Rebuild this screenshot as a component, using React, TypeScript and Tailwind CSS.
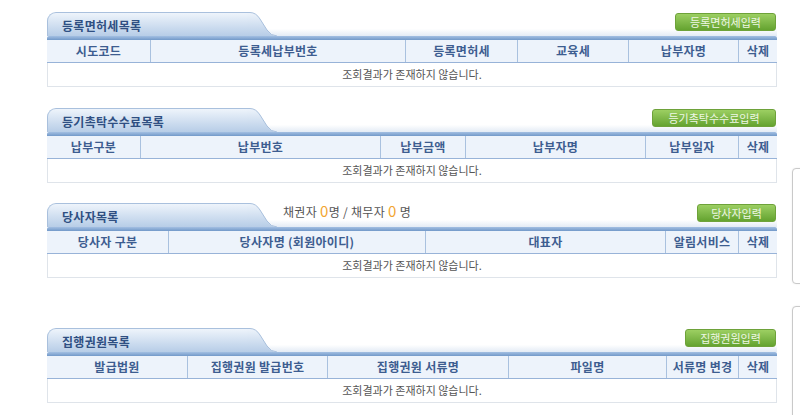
import React from "react";

const KR = { fontFamily: '"Noto Sans CJK KR", "Noto Sans", sans-serif' };

function TabCurve() {
  return (
    <svg width="30" height="24" viewBox="0 0 30 24" className="block shrink-0">
      <defs>
        <linearGradient id="tg" x1="0" y1="0" x2="0" y2="1">
          <stop offset="0" stopColor="#eef4fb" />
          <stop offset="1" stopColor="#b7cde7" />
        </linearGradient>
      </defs>
      <path d="M0,0.5 L3,0.5 Q9,0.5 13,7 L20,18 Q24,24 30,24 L0,24 Z" fill="url(#tg)" />
      <path d="M0,0.5 L3,0.5 Q9,0.5 13,7 L20,18 Q24,24 30,24" fill="none" stroke="#a9c0dd" strokeWidth="1" />
    </svg>
  );
}

type Sec = {
  title: string;
  button: string;
  btnW: string;
  cols: string;
  heads: string[];
  extra?: boolean;
  mt: string;
};

const sections: Sec[] = [
  {
    title: "등록면허세목록",
    button: "등록면허세입력",
    btnW: "w-[101px]",
    cols: "grid-cols-[103px_255px_112px_111px_110px_39px]",
    heads: ["시도코드", "등록세납부번호", "등록면허세", "교육세", "납부자명", "삭제"],
    mt: "mt-[12px]",
  },
  {
    title: "등기촉탁수수료목록",
    button: "등기촉탁수수료입력",
    btnW: "w-[124px]",
    cols: "grid-cols-[93px_240px_85px_180px_93px_39px]",
    heads: ["납부구분", "납부번호", "납부금액", "납부자명", "납부일자", "삭제"],
    mt: "mt-[21px]",
  },
  {
    title: "당사자목록",
    button: "당사자입력",
    btnW: "w-[79px]",
    cols: "grid-cols-[121px_257px_240px_73px_39px]",
    heads: ["당사자 구분", "당사자명 (회원아이디)", "대표자", "알림서비스", "삭제"],
    extra: true,
    mt: "mt-[20px]",
  },
  {
    title: "집행권원목록",
    button: "집행권원입력",
    btnW: "w-[91px]",
    cols: "grid-cols-[140px_140px_181px_158px_72px_39px]",
    heads: ["발급법원", "집행권원 발급번호", "집행권원 서류명", "파일명", "서류명 변경", "삭제"],
    mt: "mt-[50px]",
  },
];

function Section({ s }: { s: Sec }) {
  return (
    <div className={s.mt}>
      <div className="flex h-[24px] items-start bg-[linear-gradient(to_bottom,transparent_70%,#e3ebf5)]">
        <div className="flex h-[24px] items-end">
          <div className="flex h-[24px] w-[200px] items-end rounded-tl-[9px] border-l border-t border-[#a9c0dd] bg-gradient-to-b from-[#eef4fb] to-[#b7cde7] pb-[3px] pl-[14px]">
            <span className="text-[12px] font-bold leading-[14px] tracking-[0.3px] text-[#2f4f82]">{s.title}</span>
          </div>
          <TabCurve />
        </div>
        {s.extra ? (
          <div className="ml-[6px] mt-[1px] flex items-baseline text-[12px] leading-[14px] tracking-[0.3px] text-[#555]">
            <span>채권자&nbsp;</span>
            <span className="text-[15px] text-[#f2a531]">0</span>
            <span>명 / 채무자&nbsp;</span>
            <span className="text-[15px] text-[#f2a531]">0</span>
            <span>&nbsp;명</span>
          </div>
        ) : null}
        <div className="flex-1" />
        <div
          className={`${s.btnW} mr-[1px] mt-[1px] flex h-[18px] items-center justify-center rounded-[3px] border border-[#6ea23a] bg-gradient-to-b from-[#9ccf62] to-[#64a32f] text-[11px] leading-none text-[#eef7e4]`}
        >
          {s.button}
        </div>
      </div>
      <div className="h-[4px] rounded-t-[2px] bg-gradient-to-b from-[#a3bfe2] to-[#7299c9]" />
      <div className={`grid ${s.cols} h-[23px] border-b border-[#98b3d8] bg-[#edf3fb]`}>
        {s.heads.map((h, i) => (
          <div
            key={i}
            className={`flex items-center justify-center text-[12px] font-bold tracking-[0.3px] text-[#3d5d90] ${i > 0 ? "border-l border-[#a9c1df]" : ""}`}
          >
            {h}
          </div>
        ))}
      </div>
      <div className="flex h-[24px] items-center justify-center border-x border-b border-[#dfe4ea] bg-white text-[11px] text-[#555]">
        조회결과가 존재하지 않습니다.
      </div>
    </div>
  );
}

export default function App() {
  return (
    <div className="flex h-[415px] w-[800px] overflow-hidden bg-white" style={KR}>
      <div className="w-[777px] shrink-0 pl-[47px]">
        {sections.map((s, i) => (
          <Section key={i} s={s} />
        ))}
      </div>
      <div className="ml-[15px] flex shrink-0 flex-col pt-[168px]">
        <div className="h-[116px] w-[80px] shrink-0 rounded-[4px] border border-[#c9c9c9] bg-white shadow-[0_0_2px_rgba(0,0,0,0.08)]" />
        <div className="mt-[22px] h-[200px] w-[80px] shrink-0 rounded-[4px] border border-[#c9c9c9] bg-white shadow-[0_0_2px_rgba(0,0,0,0.08)]" />
      </div>
    </div>
  );
}
